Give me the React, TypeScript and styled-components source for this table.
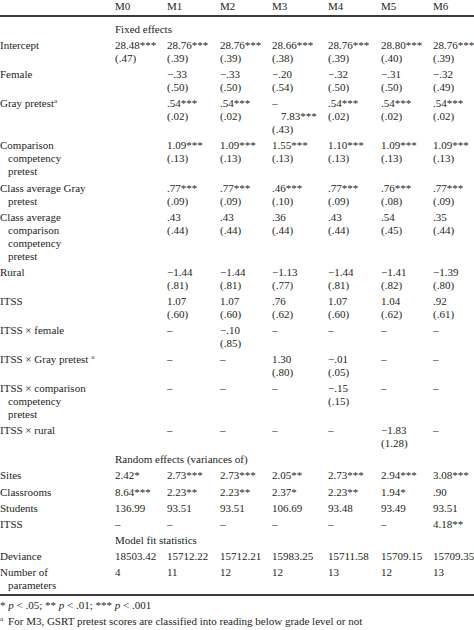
import React from 'react';
import styled, { createGlobalStyle } from 'styled-components';

const GlobalStyle = createGlobalStyle`
  html, body {
    margin: 0;
    padding: 0;
    background: #ffffff;
  }
  body {
    width: 474px;
    height: 630px;
    overflow: hidden;
    font-family: 'Liberation Serif', 'Times New Roman', serif;
    color: #231f20;
  }
`;

type Line = string | { text: string; indent: boolean };

interface DataRow {
  label: string[];
  sup?: boolean;
  values: Line[][];
}

interface Section {
  title: string;
  rows: DataRow[];
}

const models = ['M0', 'M1', 'M2', 'M3', 'M4', 'M5', 'M6'];
const colWidths = [115, 52, 53, 52, 56, 53, 52, 41];

const sections: Section[] = [
  {
    title: 'Fixed effects',
    rows: [
      {
        label: ['Intercept'],
        values: [
          ['28.48***', '(.47)'],
          ['28.76***', '(.39)'],
          ['28.76***', '(.39)'],
          ['28.66***', '(.38)'],
          ['28.76***', '(.39)'],
          ['28.80***', '(.40)'],
          ['28.76***', '(.39)'],
        ],
      },
      {
        label: ['Female'],
        values: [
          [],
          ['\u2212.33', '(.50)'],
          ['\u2212.33', '(.50)'],
          ['\u2212.20', '(.54)'],
          ['\u2212.32', '(.50)'],
          ['\u2212.31', '(.50)'],
          ['\u2212.32', '(.49)'],
        ],
      },
      {
        label: ['Gray pretest'],
        sup: true,
        values: [
          [],
          ['.54***', '(.02)'],
          ['.54***', '(.02)'],
          ['\u2013', { text: '7.83***', indent: true }, '(.43)'],
          ['.54***', '(.02)'],
          ['.54***', '(.02)'],
          ['.54***', '(.02)'],
        ],
      },
      {
        label: ['Comparison', 'competency', 'pretest'],
        values: [
          [],
          ['1.09***', '(.13)'],
          ['1.09***', '(.13)'],
          ['1.55***', '(.13)'],
          ['1.10***', '(.13)'],
          ['1.09***', '(.13)'],
          ['1.09***', '(.13)'],
        ],
      },
      {
        label: ['Class average Gray', 'pretest'],
        values: [
          [],
          ['.77***', '(.09)'],
          ['.77***', '(.09)'],
          ['.46***', '(.10)'],
          ['.77***', '(.09)'],
          ['.76***', '(.08)'],
          ['.77***', '(.09)'],
        ],
      },
      {
        label: ['Class average', 'comparison', 'competency', 'pretest'],
        values: [
          [],
          ['.43', '(.44)'],
          ['.43', '(.44)'],
          ['.36', '(.44)'],
          ['.43', '(.44)'],
          ['.54', '(.45)'],
          ['.35', '(.44)'],
        ],
      },
      {
        label: ['Rural'],
        values: [
          [],
          ['\u22121.44', '(.81)'],
          ['\u22121.44', '(.81)'],
          ['\u22121.13', '(.77)'],
          ['\u22121.44', '(.81)'],
          ['\u22121.41', '(.82)'],
          ['\u22121.39', '(.80)'],
        ],
      },
      {
        label: ['ITSS'],
        values: [
          [],
          ['1.07', '(.60)'],
          ['1.07', '(.60)'],
          ['.76', '(.62)'],
          ['1.07', '(.60)'],
          ['1.04', '(.62)'],
          ['.92', '(.61)'],
        ],
      },
      {
        label: ['ITSS \u00d7 female'],
        values: [[], ['\u2013'], ['\u2212.10', '(.85)'], ['\u2013'], ['\u2013'], ['\u2013'], ['\u2013']],
      },
      {
        label: ['ITSS \u00d7 Gray pretest '],
        sup: true,
        values: [[], ['\u2013'], ['\u2013'], ['1.30', '(.80)'], ['\u2212.01', '(.05)'], ['\u2013'], ['\u2013']],
      },
      {
        label: ['ITSS \u00d7 comparison', 'competency', 'pretest'],
        values: [[], ['\u2013'], ['\u2013'], ['\u2013'], ['\u2212.15', '(.15)'], ['\u2013'], ['\u2013']],
      },
      {
        label: ['ITSS \u00d7 rural'],
        values: [[], ['\u2013'], ['\u2013'], ['\u2013'], ['\u2013'], ['\u22121.83', '(1.28)'], ['\u2013']],
      },
    ],
  },
  {
    title: 'Random effects (variances of)',
    rows: [
      { label: ['Sites'], values: [['2.42*'], ['2.73***'], ['2.73***'], ['2.05**'], ['2.73***'], ['2.94***'], ['3.08***']] },
      { label: ['Classrooms'], values: [['8.64***'], ['2.23**'], ['2.23**'], ['2.37*'], ['2.23**'], ['1.94*'], ['.90']] },
      { label: ['Students'], values: [['136.99'], ['93.51'], ['93.51'], ['106.69'], ['93.48'], ['93.49'], ['93.51']] },
      { label: ['ITSS'], values: [['\u2013'], ['\u2013'], ['\u2013'], ['\u2013'], ['\u2013'], ['\u2013'], ['4.18**']] },
    ],
  },
  {
    title: 'Model fit statistics',
    rows: [
      {
        label: ['Deviance'],
        values: [['18503.42'], ['15712.22'], ['15712.21'], ['15983.25'], ['15711.58'], ['15709.15'], ['15709.35']],
      },
      { label: ['Number of', 'parameters'], values: [['4'], ['11'], ['12'], ['12'], ['13'], ['12'], ['13']] },
    ],
  },
];

export default function App() {
  let sectionIndex = 0;
  return (
    <>
      <GlobalStyle />
      <Page>
        <Table>
          <colgroup>
            {colWidths.map((w, i) => (
              <col key={i} style={{ width: w }} />
            ))}
          </colgroup>
          <thead>
            <tr>
              <HeadCell />
              {models.map((m) => (
                <HeadCell key={m}>{m}</HeadCell>
              ))}
              <HeadCell />
            </tr>
          </thead>
          <tbody>
            {sections.map((section) => {
              const first = sectionIndex++ === 0;
              return (
                <React.Fragment key={section.title}>
                  <tr>
                    <Cell $first={first} />
                    <SectionTitle colSpan={7} $first={first}>
                      {section.title}
                    </SectionTitle>
                  </tr>
                  {section.rows.map((row, ri) => {
                    const last = section.title === 'Model fit statistics' && ri === section.rows.length - 1;
                    return (
                      <tr key={section.title + ri}>
                        <LabelCell $last={last}>
                          {row.label.map((l, li) => (
                            <LabelLine key={li} $cont={li > 0}>
                              {l}
                              {row.sup && li === row.label.length - 1 && <Sup>a</Sup>}
                            </LabelLine>
                          ))}
                        </LabelCell>
                        {row.values.map((v, vi) => (
                          <Cell key={vi} $last={last}>
                            {v.map((line, k) =>
                              typeof line === 'string' ? (
                                <ValueLine key={k}>{line}</ValueLine>
                              ) : (
                                <ValueLine key={k} $indent={line.indent}>
                                  {line.text}
                                </ValueLine>
                              )
                            )}
                          </Cell>
                        ))}
                        <Cell $last={last} />
                      </tr>
                    );
                  })}
                </React.Fragment>
              );
            })}
          </tbody>
        </Table>
        <Notes>
          <Note>
            * <i>p</i> &lt; .05; ** <i>p</i> &lt; .01; *** <i>p</i> &lt; .001
          </Note>
          <Note>
            <NoteMark>a</NoteMark>For M3, GSRT pretest scores are classified into reading below grade level or not
          </Note>
        </Notes>
      </Page>
    </>
  );
}

const Page = styled.div`
  width: 474px;
  font-size: 11px;
  line-height: 13.05px;
`;

const Table = styled.table`
  width: 474px;
  border-collapse: collapse;
  table-layout: fixed;
`;

const HeadCell = styled.th`
  padding: 0 0 2px 0;
  line-height: 13px;
  text-align: left;
  font-weight: normal;
  white-space: nowrap;
  border-bottom: 2px solid #3c3c3c;
`;

const Cell = styled.td<{ $first?: boolean; $last?: boolean }>`
  padding: ${(p) => (p.$first ? '6px' : '3px')} 0 ${(p) => (p.$last ? '2px' : '0')} 0;
  vertical-align: top;
  white-space: nowrap;
  border-bottom: ${(p) => (p.$last ? '2px solid #3c3c3c' : 'none')};
`;

const SectionTitle = styled(Cell)`
  text-align: left;
`;

const LabelCell = styled(Cell)`
  padding-left: 0;
`;

const LabelLine = styled.div<{ $cont?: boolean }>`
  padding-left: ${(p) => (p.$cont ? '8px' : '0')};
`;

const ValueLine = styled.div<{ $indent?: boolean }>`
  padding-left: ${(p) => (p.$indent ? '9px' : '0')};
`;

const Sup = styled.sup`
  font-size: 7px;
  line-height: 0;
  vertical-align: 4px;
`;

const Notes = styled.div`
  padding-top: 3px;
`;

const Note = styled.div`
  margin-bottom: 3.5px;
  white-space: nowrap;
`;

const NoteMark = styled.sup`
  font-size: 7px;
  line-height: 0;
  vertical-align: 4px;
  margin-right: 5px;
`;
